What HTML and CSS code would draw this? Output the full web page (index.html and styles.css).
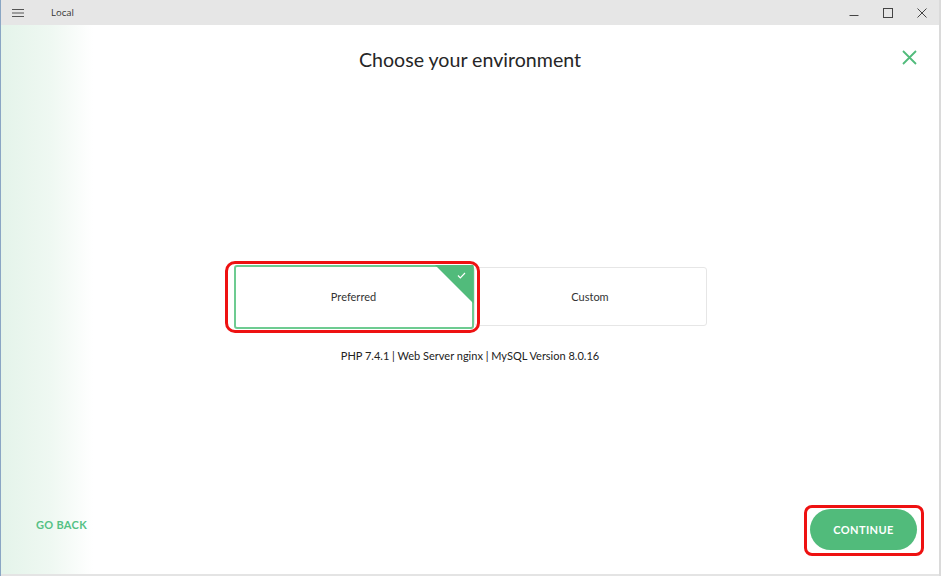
FILE: index.html
```html
<!DOCTYPE html>
<html lang="en">
<head>
    <meta charset="UTF-8">
    <title>Local</title>
    <link rel="stylesheet" href="styles.css">
</head>
<body>
    <div class="window">

        <!-- Title bar -->
        <div class="titlebar">
            <div class="titlebar-left">
                <svg class="menu-icon" width="12" height="10" viewBox="0 0 12 10">
                    <path d="M0 1.5h12M0 5h12M0 8.5h12" stroke="#555" stroke-width="1.2"/>
                </svg>
                <span class="app-name">Local</span>
            </div>
            <div class="win-controls">
                <svg width="12" height="12" viewBox="0 0 12 12"><path d="M1.5 8.5h9" stroke="#444" stroke-width="1"/></svg>
                <svg width="12" height="12" viewBox="0 0 12 12"><rect x="1.5" y="1.5" width="9" height="9" fill="none" stroke="#444" stroke-width="1"/></svg>
                <svg width="12" height="12" viewBox="0 0 12 12"><path d="M1.5 1.5l9 9M10.5 1.5l-9 9" stroke="#444" stroke-width="1"/></svg>
            </div>
        </div>

        <!-- Main -->
        <div class="main">
            <div class="header">
                <span></span>
                <h1>Choose your environment</h1>
                <svg class="close-btn" width="15" height="15" viewBox="0 0 15 15">
                    <path d="M1 1l13 13M14 1L1 14" stroke="#51bb7b" stroke-width="1.8"/>
                </svg>
            </div>

            <div class="middle">
                <div class="choices">
                    <div class="choice selected">
                        Preferred
                        <span class="corner">
                            <svg width="9" height="7" viewBox="0 0 9 7"><path d="M1 3.5l2.3 2.3L8 1" fill="none" stroke="#fff" stroke-width="1.2"/></svg>
                        </span>
                    </div>
                    <div class="choice">Custom</div>
                </div>
                <p class="env-info">PHP 7.4.1 | Web Server nginx | MySQL Version 8.0.16</p>
            </div>

            <div class="footer">
                <a href="#" class="go-back">GO BACK</a>
                <div class="highlight">
                    <button class="continue">CONTINUE</button>
                </div>
            </div>
        </div>
    </div>
</body>
</html>
```

FILE: styles.css
```css
/* Page */
body {
    margin: 0;
    padding: 0;
    font-family: Lato, "Open Sans", sans-serif;
    background-color: #fff;
}

.window {
    height: 576px;
    display: flex;
    flex-direction: column;
    border-left: 1px solid #8aa6c4;
    border-right: 2px solid #dadada;
    box-sizing: border-box;
}

/* Title bar */
.titlebar {
    height: 25px;
    background-color: #e6e6e6;
    display: flex;
    align-items: center;
    justify-content: space-between;
}

.titlebar-left {
    display: flex;
    align-items: center;
}

.menu-icon {
    margin-left: 11px;
}

.app-name {
    margin-left: 27px;
    font-family: "Open Sans", sans-serif;
    font-size: 9.5px;
    color: #333;
}

.win-controls {
    display: flex;
    gap: 22px;
    margin-right: 11px;
}

/* Main area */
.main {
    flex: 1;
    display: grid;
    grid-template-rows: auto 1fr auto;
    background: linear-gradient(to right, #e4f4ea 0px, #eff8f2 50px, #fff 92px);
    border-bottom: 2px solid #e4e4e4;
}

.header {
    display: grid;
    grid-template-columns: 1fr auto 1fr;
    align-items: start;
    padding: 23px 22px 0 22px;
}

.header h1 {
    margin: 0;
    font-size: 19.6px;
    line-height: 24px;
    font-weight: 400;
    color: #262626;
}

.close-btn {
    justify-self: end;
    margin-top: 2px;
}

.middle {
    display: flex;
    flex-direction: column;
    align-items: center;
    justify-content: center;
    padding-top: 50px;
}

.choices {
    display: flex;
    align-items: center;
}

.choice {
    position: relative;
    width: 233px;
    height: 59px;
    display: flex;
    align-items: center;
    justify-content: center;
    font-size: 11px;
    color: #333;
    background-color: #fff;
    border: 1px solid #e6e6e6;
    border-radius: 3px;
    box-sizing: border-box;
}

.choice.selected {
    width: 240px;
    height: 64px;
    z-index: 1;
    border: 2px solid #6dcb91;
    border-radius: 3px;
}

/* red annotation frame */
.choice.selected::before {
    content: "";
    position: absolute;
    top: -6px;
    bottom: -6px;
    left: -11px;
    right: -8px;
    border: 3px solid #ee1111;
    border-radius: 10px;
}

.corner {
    position: absolute;
    top: -2px;
    right: -2px;
    width: 39px;
    height: 39px;
    background-color: #51bb7b;
    clip-path: polygon(0 0, 100% 0, 100% 100%);
}

.corner svg {
    position: absolute;
    top: 7px;
    right: 8px;
}

.env-info {
    margin: 20px 0 0;
    font-size: 11px;
    line-height: 14px;
    color: #222;
}

/* Footer */
.footer {
    display: flex;
    justify-content: space-between;
    align-items: center;
    padding: 0 15px 18px 35px;
}

.go-back {
    margin-bottom: 13px;
    font-size: 11px;
    font-weight: 700;
    letter-spacing: 0.3px;
    color: #55c185;
    text-decoration: none;
}

.highlight {
    display: flex;
    padding: 1px 4px 3px 3px;
    border: 3px solid #ee1111;
    border-radius: 8px;
}

.continue {
    width: 107px;
    height: 41px;
    border: none;
    border-radius: 21px;
    background-color: #51bb7b;
    color: #fff;
    font-family: Lato, "Open Sans", sans-serif;
    font-size: 11px;
    font-weight: 700;
    letter-spacing: 0.4px;
    cursor: pointer;
}
```
